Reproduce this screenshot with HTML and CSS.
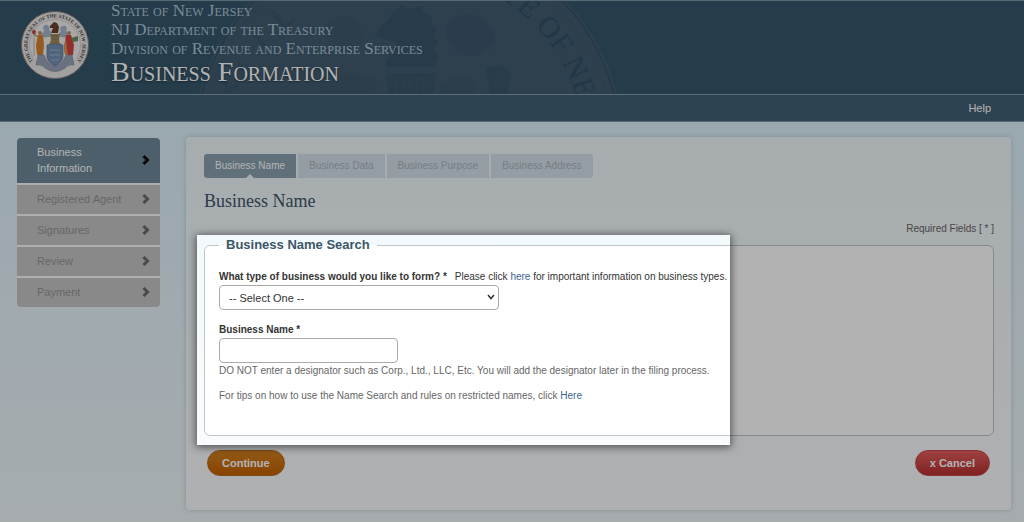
FILE: index.html
```html
<!DOCTYPE html>
<html lang="en">
<head>
    <meta charset="utf-8">
    <meta name="viewport" content="width=device-width, initial-scale=1">
    <title>Business Formation</title>
    <link rel="stylesheet" href="styles.css">
</head>
<body>
    <header class="masthead">
        <svg class="watermark" viewBox="0 0 440 93" width="440" height="93" aria-hidden="true">
            <defs>
                <path id="wmArc" d="M220 -29 A176 176 0 0 1 396 147"/>
            </defs>
            <circle cx="220" cy="147" r="216" fill="#435c70"/>
            <circle cx="220" cy="147" r="213" fill="none" stroke="#36546a" stroke-width="2"/>
            <circle cx="220" cy="147" r="206" fill="none" stroke="#3d596d" stroke-width="1"/>
            <text class="watermark-text"><textPath href="#wmArc" startOffset="46">STATE OF NE</textPath></text>
            <path d="M34 76 L44 93 M50 62 L62 76 M84 10 L96 26 L106 19 M66 34 L78 46 M36 90 L50 84" stroke="#3a566b" stroke-width="3" fill="none"/>
            <g fill="#3a556a">
                <path d="M198 66 C197 54 210 50 208 42 L196 38 L187 35 L190 28 L203 16 C205 8 212 8 214 3 L219 8 C226 5 230 8 233 5 L236 12 L244 15 L243 22 L249 28 L245 34 L250 41 L246 48 L250 55 L246 66 Z"/>
                <path d="M198 72 H248 L246 93 H200 Z" opacity=".8"/>
                <path d="M140 22 C150 10 168 14 172 26 C182 34 176 46 166 46 C156 56 142 48 144 38 C134 34 134 26 140 22 Z" opacity=".3"/>
                <path d="M262 20 C272 10 294 12 300 24 C312 30 308 48 296 50 C286 60 264 54 266 44 C254 38 254 26 262 20 Z" opacity=".45"/>
                <path d="M132 84 C150 68 180 70 190 82 L186 93 H130 Z" opacity=".3"/>
                <path d="M252 84 C264 70 284 72 290 84 L288 93 H252 Z" opacity=".3"/>
                <path d="M298 68 C306 62 318 64 322 72 L320 93 H302 Z" opacity=".8"/>
            </g>
            <path d="M208 76 V93 M215 76 V93 M222 76 V93 M229 76 V93 M236 76 V93" stroke="#435c70"/>
            <circle cx="312" cy="80" r="5" fill="none" stroke="#435c70"/>
        </svg>
        <svg class="seal" viewBox="0 0 68 68" width="68" height="68" role="img" aria-label="New Jersey state seal">
            <defs>
                <path id="sealArc" d="M34 61.5 A27.5 27.5 0 0 1 34 6.5 A27.5 27.5 0 0 1 34 61.5"/>
            </defs>
            <circle cx="34" cy="34" r="33.5" fill="#e8e6e4" stroke="#8d8580"/>
            <circle cx="34" cy="34" r="25.5" fill="#f0efee" stroke="#c9c5c2" stroke-width=".6"/>
            <text class="seal-text" text-anchor="middle"><textPath href="#sealArc" startOffset="50%">THE GREAT SEAL OF THE STATE OF NEW JERSEY</textPath></text>
            <!-- crest -->
            <path d="M22 16 C25 11 30 15 28 19 C32 21 30 27 26 26 C21 28 19 22 23 21 Z" fill="#a3b6cc"/>
            <path d="M39 17 C43 12 48 16 45 20 C49 23 45 28 41 26 C37 26 37 21 40 21 Z" fill="#a3b6cc"/>
            <path d="M30 22 L32 17 L29 17 L29 15 L33 11 L36 12 L38 16 L37 22 Z" fill="#69432f"/>
            <path d="M29 23 H39 L38 30 L40 34 H28 L30 29 Z" fill="#a88b50"/>
            <path d="M31 25 H37 M31 28 H37" stroke="#6e7780"/>
            <!-- Liberty and Ceres -->
            <circle cx="19" cy="22" r="2" fill="#c08e68"/>
            <path d="M17 24 L22 24 L23 34 L22 44 L16 44 L15 34 Z" fill="#d6822e"/>
            <path d="M17 26 L13 23 L13 20" fill="none" stroke="#c08e68" stroke-width="1.5"/>
            <path d="M13 18 V45" stroke="#b6a27f" stroke-width=".7"/>
            <circle cx="13" cy="21" r="2" fill="#c94545"/>
            <circle cx="48" cy="22" r="2" fill="#c08e68"/>
            <path d="M45 24 L50 24 L53 34 L52 44 L44 44 L43 36 Z" fill="#d24343"/>
            <path d="M45 27 L43 36 L44 44 L47 44 L46 38 Z" fill="#e09452"/>
            <path d="M50 27 L57 25 L57 30 L52 31 Z" fill="#6c8d5c"/>
            <!-- shield and ribbon -->
            <path d="M17 44 H23 L26 50 Q34 60 42 50 L45 44 H51 L53 54 Q47 53 44 57 Q34 64 24 57 Q21 53 15 54 Z" fill="#98a3b9" stroke="#7b8498" stroke-width=".6"/>
            <path d="M26 34 Q34 31 42 34 V46 Q41 52 34 55 Q27 52 26 46 Z" fill="#7391b3" stroke="#587290" stroke-width=".7"/>
            <path d="M29 39 H39 M29 44 H39 M30 49 H38" stroke="#b1bfd0" stroke-width=".8"/>
        </svg>
        <div class="agency">
            <p class="agency-line">State of New Jersey</p>
            <p class="agency-line">NJ Department of the Treasury</p>
            <p class="agency-line">Division of Revenue and Enterprise Services</p>
            <h1>Business Formation</h1>
        </div>
    </header>

    <nav class="topbar">
        <a href="#">Help</a>
    </nav>

    <div class="layout">
        <nav class="steps">
            <a class="step active" href="#"><span>Business Information</span>
                <svg class="chevron" viewBox="0 0 8 10" width="8" height="10"><path d="M1.5 1 L5.5 5 L1.5 9"/></svg></a>
            <a class="step" href="#"><span>Registered Agent</span>
                <svg class="chevron" viewBox="0 0 8 10" width="8" height="10"><path d="M1.5 1 L5.5 5 L1.5 9"/></svg></a>
            <a class="step" href="#"><span>Signatures</span>
                <svg class="chevron" viewBox="0 0 8 10" width="8" height="10"><path d="M1.5 1 L5.5 5 L1.5 9"/></svg></a>
            <a class="step" href="#"><span>Review</span>
                <svg class="chevron" viewBox="0 0 8 10" width="8" height="10"><path d="M1.5 1 L5.5 5 L1.5 9"/></svg></a>
            <a class="step" href="#"><span>Payment</span>
                <svg class="chevron" viewBox="0 0 8 10" width="8" height="10"><path d="M1.5 1 L5.5 5 L1.5 9"/></svg></a>
        </nav>

        <main class="panel">
            <div class="tabs">
                <a class="tab active" href="#">Business Name</a>
                <a class="tab" href="#">Business Data</a>
                <a class="tab" href="#">Business Purpose</a>
                <a class="tab" href="#">Business Address</a>
            </div>
            <h2>Business Name</h2>
            <p class="required">Required Fields [ * ]</p>

            <form>
                <div class="form-area">
                    <fieldset>
                        <legend>Business Name Search</legend>
                        <div class="label-row">
                            <label for="businessType">What type of business would you like to form? *</label>
                            <span>Please click <a href="#">here</a> for important information on business types.</span>
                        </div>
                        <div class="select-wrap">
                            <select id="businessType">
                                <option>-- Select One --</option>
                            </select>
                            <svg class="select-arrow" viewBox="0 0 8 6" width="8" height="6"><path d="M1 1 L4 4.5 L7 1"/></svg>
                        </div>
                        <label class="name-label" for="businessName">Business Name *</label>
                        <input type="text" id="businessName">
                        <p class="hint">DO NOT enter a designator such as Corp., Ltd., LLC, Etc. You will add the designator later in the filing process.</p>
                        <p class="hint tips">For tips on how to use the Name Search and rules on restricted names, click <a href="#">Here</a></p>
                    </fieldset>
                    <div class="spotlight"></div>
                </div>
                <div class="actions">
                    <button type="submit" class="btn btn-continue">Continue</button>
                    <button type="button" class="btn btn-cancel">x Cancel</button>
                </div>
            </form>
        </main>
    </div>
</body>
</html>
```
FILE: styles.css
```css
* {
    box-sizing: border-box;
}
body {
    margin: 0;
    min-height: 100vh;
    font-family: "Liberation Sans", Arial, sans-serif;
    font-size: 10px;
    line-height: 16px;
    color: #333;
    background: linear-gradient(#d8f0fc, #eef6fa);
}
p, h1, h2 {
    margin: 0;
}
a {
    color: #3c6494;
    text-decoration: none;
}

/* header */
.masthead {
    position: relative;
    display: flex;
    gap: 22px;
    height: 95px;
    padding: 0 21px;
    background: #36566b;
    border-top: 1px solid #7d98a4;
    border-bottom: 1px solid #86a1ab;
    overflow: hidden;
}
.watermark {
    position: absolute;
    left: 188px;
    top: 0;
}
.watermark-text {
    font: 30px "Liberation Serif", serif;
    fill: #325066;
}
.seal {
    margin-top: 10px;
    flex: none;
}
.seal-text {
    font: bold 5px "Liberation Serif", serif;
    fill: #4c4644;
}
.agency {
    position: relative;
    font-family: "Liberation Serif", serif;
    font-variant: small-caps;
    color: #aec8d6;
}
.agency-line {
    font-size: 17px;
    line-height: 19px;
}
h1 {
    font-size: 28px;
    font-weight: normal;
    line-height: 28px;
    color: #fff;
    text-shadow: 0 1px 2px #1d3442;
}
.topbar {
    display: flex;
    justify-content: flex-end;
    height: 27px;
    padding: 5px 33px;
    font-size: 11px;
    background: #436175;
    border-bottom: 1px solid #7d98a6;
}
.topbar a {
    color: #fff;
}

.layout {
    display: grid;
    grid-template-columns: 143px 1fr;
    gap: 26px;
    align-items: start;
    padding: 15px 13px 12px 17px;
}

/* steps */
.steps {
    display: flex;
    flex-direction: column;
    gap: 2px;
    margin-top: 1px;
    background: #f6fafb;
    border-radius: 4px;
    overflow: hidden;
}
.step {
    display: flex;
    align-items: center;
    justify-content: space-between;
    padding: 6px 10px 7px 20px;
    font-size: 11px;
    color: #949494;
    background: #c5c5c5;
}
.step span {
    max-width: 90px;
}
.step.active {
    color: #fff;
    background: #6e8998;
}
.chevron {
    flex: none;
    fill: none;
    stroke: #6b6b6b;
    stroke-width: 3;
}
.step.active .chevron {
    stroke: #111;
}

/* content panel */
.panel {
    padding: 17px 17px 34px 18px;
    background: linear-gradient(#eff8fb, #fbfcfe);
    border-radius: 4px;
    box-shadow: 0 0 5px rgba(90, 120, 140, .3);
}
.tabs {
    display: flex;
    gap: 2px;
}
.tab {
    padding: 4px 11px;
    color: #a9b5bf;
    background: #d5e1ea;
}
.tab:first-child {
    border-radius: 3px 0 0 3px;
}
.tab:last-child {
    border-radius: 0 3px 3px 0;
}
.tab.active {
    position: relative;
    color: #fff;
    background: #8aa1b0;
}
.tab.active::after {
    content: "";
    position: absolute;
    left: 50%;
    bottom: 0;
    border: 4px solid transparent;
    border-top: 0;
    border-bottom-color: #eff8fb;
    transform: translateX(-50%);
}
h2 {
    margin-top: 11px;
    font: 18px/24px "Liberation Serif", serif;
    color: #3f5669;
}
.required {
    margin-top: 8px;
    text-align: right;
    color: #666;
}
.form-area {
    position: relative;
}
fieldset {
    margin: 0;
    padding: 16px 14px 31px;
    background: #fff;
    border: 1px solid #bcc6cb;
    border-radius: 6px;
}
legend {
    padding: 0 7px;
    font-size: 13px;
    font-weight: bold;
    color: #3b5768;
}
label {
    font-weight: bold;
}
.label-row {
    display: flex;
    gap: 8px;
}
.select-wrap {
    position: relative;
    width: 280px;
}
select, input {
    display: block;
    height: 25px;
    border: 1px solid #aaa;
    border-radius: 4px;
    background: #fff;
    font: 11px "Liberation Sans", Arial, sans-serif;
    color: #333;
}
select {
    width: 100%;
    padding: 0 9px;
    appearance: none;
}
input {
    width: 179px;
    padding: 0 8px;
}
.select-arrow {
    position: absolute;
    right: 4px;
    top: 9px;
    fill: none;
    stroke: #333;
    stroke-width: 1.5;
    pointer-events: none;
}
.name-label {
    display: block;
    margin-top: 12px;
}
.hint {
    color: #666;
}
.tips {
    margin-top: 9px;
}
.actions {
    display: flex;
    justify-content: space-between;
    margin-top: 14px;
    padding: 0 4px 0 3px;
}
.btn {
    height: 26px;
    padding: 0 14px;
    border-radius: 13px;
    font: bold 11px "Liberation Sans", Arial, sans-serif;
    color: #fff;
}
.btn-continue {
    border: 1px solid #b96a1c;
    background: linear-gradient(#d28222, #c46000);
}
.btn-cancel {
    border: 1px solid #c64a4a;
    background: linear-gradient(#e45e5e, #b93030);
}

/* dims the page around the highlighted part of the form */
.spotlight {
    position: absolute;
    z-index: 10;
    top: -2px;
    bottom: -9px;
    left: -7px;
    width: 533px;
    pointer-events: none;
    box-shadow: 0 1px 8px 1px rgba(0, 0, 0, .55), 0 0 0 9999px rgba(0, 0, 0, .3);
}
```
